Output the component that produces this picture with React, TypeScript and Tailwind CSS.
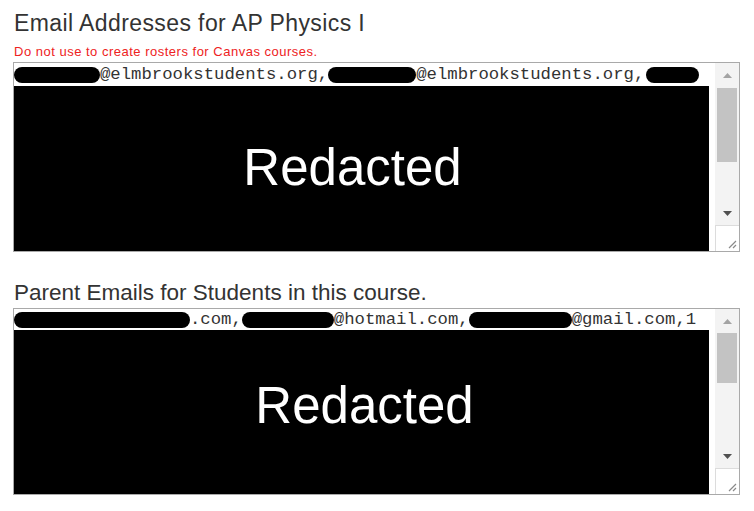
function Blob({ className }: { className: string }) {
  return <span className={`inline-block h-[16px] shrink-0 rounded-full bg-black ${className}`} />;
}

function UpArrow() {
  return (
    <svg width="9" height="5" viewBox="0 0 9 5">
      <path d="M0 5 L4.5 0 L9 5 Z" fill="#a3a3a3" />
    </svg>
  );
}

function DownArrow() {
  return (
    <svg width="9" height="5" viewBox="0 0 9 5">
      <path d="M0 0 L4.5 5 L9 0 Z" fill="#505050" />
    </svg>
  );
}

function Resize() {
  return (
    <div className="flex items-end justify-end border-t border-l border-[#dcdcdc] bg-white h-[26px] pr-[2px] pb-[2px]">
      <svg width="11" height="11" viewBox="0 0 11 11">
        <path d="M10 3 L3 10 M10 7 L7 10" stroke="#8a8a8a" strokeWidth="1.2" />
      </svg>
    </div>
  );
}

function Scrollbar({ big }: { big: boolean }) {
  return (
    <div className="flex w-[24px] shrink-0 flex-col bg-[#f3f3f3]">
      <div className="flex h-[24px] items-center justify-center">
        <UpArrow />
      </div>
      <div className="px-[2px]">
        <div className={`bg-[#c3c3c3] ${big ? "mt-[1px] h-[74px]" : "h-[50px]"}`} />
      </div>
      <div className="flex-1" />
      <div className="flex h-[24px] items-center justify-center">
        <DownArrow />
      </div>
      <Resize />
    </div>
  );
}

export default function App() {
  return (
    <div className="h-[511px] w-[754px] overflow-hidden bg-white font-['Liberation_Sans',Arial,sans-serif] text-[#333]">
      <div className="pl-[14px] pt-[10px]">
        <h2 className="text-[23px] leading-[26px] tracking-[0.4px]">Email Addresses for AP Physics I</h2>
        <p className="mt-[9px] text-[13px] leading-[14px] tracking-[0.5px] text-[#ee2222]">Do not use to create rosters for Canvas courses.</p>
      </div>

      <div className="ml-[13px] mt-[3px] flex h-[190px] w-[727px] border border-[#a9a9a9]">
        <div className="flex min-w-0 flex-1 flex-col">
          <div className="flex h-[23px] items-center whitespace-nowrap font-['Liberation_Mono',monospace] text-[17.3px] leading-[23px] text-[#333]">
            <Blob className="w-[86px]" />
            <span>@elmbrookstudents.org,</span>
            <Blob className="w-[88px]" />
            <span>@elmbrookstudents.org,</span>
            <Blob className="ml-[2px] w-[53px]" />
          </div>
          <div className="mr-[6px] flex flex-1 items-center justify-center bg-black pr-[18px]">
            <span className="text-[51px] text-white">Redacted</span>
          </div>
        </div>
        <Scrollbar big={true} />
      </div>

      <div className="pl-[14px] pt-[28px]">
        <h2 className="text-[22.5px] leading-[26px]">Parent Emails for Students in this course.</h2>
      </div>

      <div className="ml-[13px] mt-[2px] flex h-[187px] w-[727px] border border-[#a9a9a9]">
        <div className="flex min-w-0 flex-1 flex-col">
          <div className="flex h-[21px] items-center whitespace-nowrap font-['Liberation_Mono',monospace] text-[17.3px] leading-[21px] text-[#333]">
            <Blob className="w-[176px]" />
            <span>.com,</span>
            <Blob className="w-[92px]" />
            <span>@hotmail.com,</span>
            <Blob className="w-[103px]" />
            <span>@gmail.com,1</span>
          </div>
          <div className="mr-[6px] flex flex-1 items-center justify-center bg-black pb-[12px] pl-[6px]">
            <span className="text-[51px] text-white">Redacted</span>
          </div>
        </div>
        <Scrollbar big={false} />
      </div>
    </div>
  );
}
